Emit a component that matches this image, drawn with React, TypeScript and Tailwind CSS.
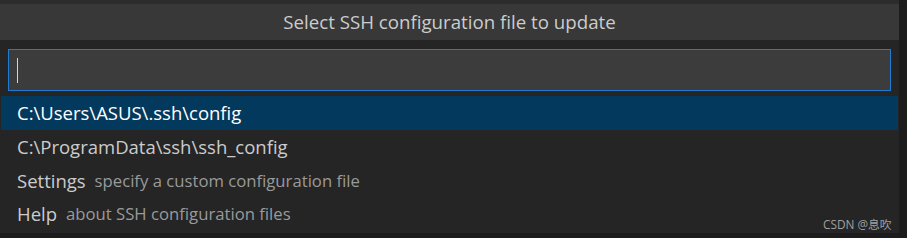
import React from "react";

const font = { fontFamily: '"Open Sans", "Noto Sans CJK SC", sans-serif' };

export default function App() {
  return (
    <div className="w-[907px] h-[238px] bg-[#1c1c1c] flex overflow-hidden relative" style={font}>
      <div className="w-[899px] h-[233px] flex flex-col bg-[#252526]">
        <div className="h-[4px] bg-[#2c2c2c]" />
        <div className="h-[36px] bg-[#383838] flex items-center justify-center text-[#cccccc] text-[18.7px] pt-[1px]">
          Select SSH configuration file to update
        </div>
        <div className="px-[8px] pt-[9px]">
          <div className="h-[42px] bg-[#3c3c3c] border border-[#1f7ad1] flex items-center pl-[8px]">
            <div className="w-px h-[25px] bg-[#d4d4d4]" />
          </div>
        </div>
        <div className="mt-[5px] flex flex-col">
          <div className="h-[34px] mx-[1px] bg-[#04395e] flex items-center pl-[16px] text-[#ffffff] text-[18.5px]">
            C:\Users\ASUS\.ssh\config
          </div>
          <div className="h-[34px] flex items-center pl-[17px] text-[#cccccc] text-[18.5px]">
            C:\ProgramData\ssh\ssh_config
          </div>
          <div className="h-[33px] flex items-center pl-[17px] text-[#cccccc] text-[18.5px]">
            Settings
            <span className="ml-[9px] text-[16.7px] text-[#9a9a9a]">specify a custom configuration file</span>
          </div>
          <div className="h-[33px] flex items-center pl-[17px] text-[#cccccc] text-[18.5px]">
            Help
            <span className="ml-[9px] text-[16.7px] text-[#9a9a9a]">about SSH configuration files</span>
          </div>
        </div>
      </div>
      <span className="absolute left-[823px] top-[214px] text-[11.8px] leading-[20px] text-[#a0a0a0]">CSDN @息吹</span>
    </div>
  );
}
